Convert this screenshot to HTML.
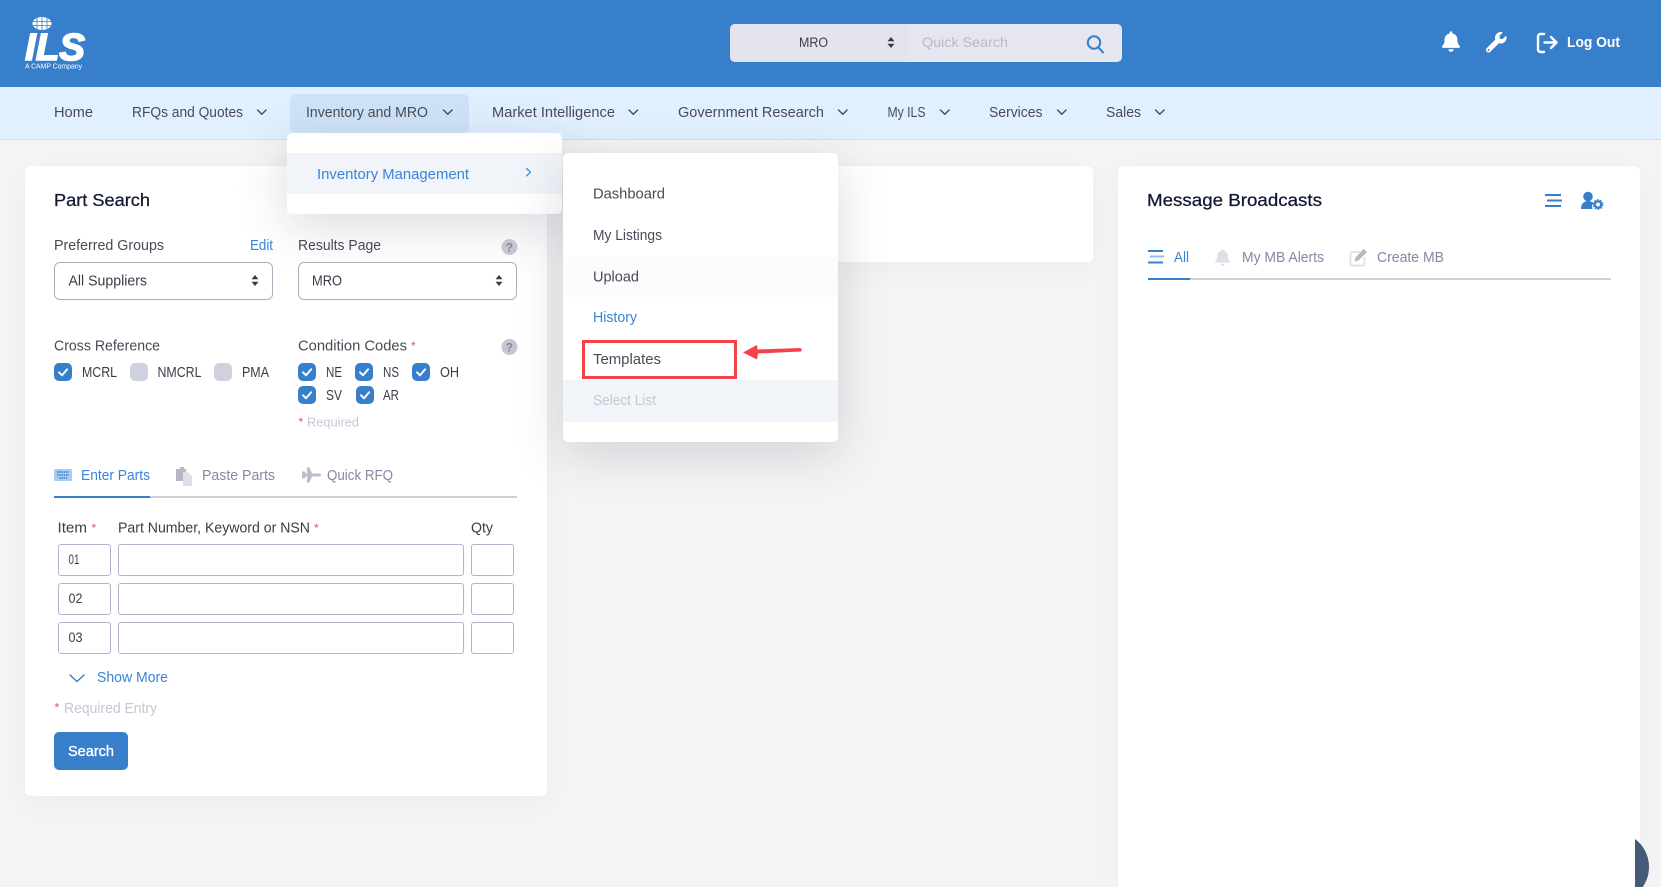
<!DOCTYPE html>
<html lang="en">
<head>
<meta charset="utf-8">
<title>ILS Part Search</title>
<style>
html,body{margin:0;padding:0;width:1661px;height:891px;overflow:hidden;background:#fff}
body{position:relative;font-family:"Liberation Sans",sans-serif}
.b{position:absolute;box-sizing:border-box}
.card{background:#fff;border-radius:6px;box-shadow:0 8px 30px rgba(40,40,70,.035)}
.drop{background:#fff;border-radius:5px;box-shadow:0 12px 50px rgba(40,40,80,.17)}
svg{position:absolute;left:0;top:0}
text{font-family:"Liberation Sans",sans-serif;font-size:14.4px;fill:#4a4a57;white-space:pre}
.blue{fill:#3a84d6}
.mut{fill:#8886a3}
.lt{fill:#c6c6d4}
.star{fill:#e0526c;font-size:12px}
.head{font-size:17.5px;fill:#11152f;font-weight:normal;stroke:#11152f;stroke-width:.25px}
.nav{fill:#4b4b55;font-size:14.6px}
.dk{fill:#3c3c48}
</style>
</head>
<body>
<!-- page layers -->
<div class="b" style="left:0;top:0;width:1661px;height:887px;background:#f4f4f4"></div>
<div class="b card" style="left:25px;top:166px;width:522px;height:630px"></div>
<div class="b card" style="left:566px;top:166px;width:527px;height:96px"></div>
<div class="b card" style="left:1118px;top:166px;width:522px;height:721px;border-radius:6px 6px 0 0"></div>
<div class="b" style="left:0;top:0;width:1661px;height:87px;background:#377fcb"></div>
<div class="b" style="left:0;top:87px;width:1661px;height:53px;background:#e0f0fe;border-bottom:1px solid #d9dbe0"></div>
<div class="b" style="left:290px;top:94px;width:179px;height:39px;background:#cfe3f8;border-radius:6px"></div>
<div class="b drop" style="left:287px;top:133px;width:275px;height:81px"></div>
<div class="b" style="left:287px;top:153px;width:275px;height:41px;background:#f1f5f9"></div>
<div class="b drop" style="left:563px;top:153px;width:275px;height:289px"></div>
<div class="b" style="left:563px;top:256px;width:275px;height:41px;background:#fcfcfd"></div>
<div class="b" style="left:563px;top:380px;width:275px;height:42px;background:#f1f5f9"></div>
<!-- search box -->
<div class="b" style="left:730px;top:24px;width:392px;height:38px;background:#e6e6f0;border-radius:5px"></div>
<div class="b" style="left:730px;top:24px;width:178px;height:38px;background:#e4e4ee;border-radius:5px 0 0 5px"></div>
<!-- form boxes -->
<div class="b" style="left:54px;top:262px;width:219px;height:38px;border:1px solid #aeadc0;border-radius:6px;background:#fff"></div>
<div class="b" style="left:298px;top:262px;width:219px;height:38px;border:1px solid #aeadc0;border-radius:6px;background:#fff"></div>
<div class="b" style="left:58px;top:544px;width:53px;height:32px;border:1px solid #b5b2cb;border-radius:3px"></div>
<div class="b" style="left:118px;top:544px;width:346px;height:32px;border:1px solid #b5b2cb;border-radius:3px"></div>
<div class="b" style="left:471px;top:544px;width:43px;height:32px;border:1px solid #b5b2cb;border-radius:3px"></div>
<div class="b" style="left:58px;top:583px;width:53px;height:32px;border:1px solid #b5b2cb;border-radius:3px"></div>
<div class="b" style="left:118px;top:583px;width:346px;height:32px;border:1px solid #b5b2cb;border-radius:3px"></div>
<div class="b" style="left:471px;top:583px;width:43px;height:32px;border:1px solid #b5b2cb;border-radius:3px"></div>
<div class="b" style="left:58px;top:622px;width:53px;height:32px;border:1px solid #b5b2cb;border-radius:3px"></div>
<div class="b" style="left:118px;top:622px;width:346px;height:32px;border:1px solid #b5b2cb;border-radius:3px"></div>
<div class="b" style="left:471px;top:622px;width:43px;height:32px;border:1px solid #b5b2cb;border-radius:3px"></div>
<div class="b" style="left:54px;top:732px;width:74px;height:38px;background:#377fcb;border-radius:5px"></div>
<!-- tab lines -->
<div class="b" style="left:54px;top:496px;width:463px;height:2px;background:#cfd0de"></div>
<div class="b" style="left:54px;top:496px;width:96px;height:2px;background:#377fcb"></div>
<div class="b" style="left:1148px;top:278px;width:463px;height:2px;background:#cfd0de"></div>
<div class="b" style="left:1148px;top:278px;width:42px;height:2px;background:#377fcb"></div>
<!-- white strip at the bottom -->
<div class="b" style="left:0;top:887px;width:1661px;height:4px;background:#fff"></div>

<svg width="1661" height="891" viewBox="0 0 1661 891" xmlns="http://www.w3.org/2000/svg">
<defs>
<symbol id="ck" viewBox="0 0 18 18" overflow="visible">
  <rect width="18" height="18" rx="5" fill="#377fcb"/>
  <path d="M5 9.3l3 3 5.2-6" fill="none" stroke="#fff" stroke-width="1.9" stroke-linecap="round" stroke-linejoin="round"/>
</symbol>
<symbol id="sort" viewBox="0 0 8 12" overflow="visible">
  <path d="M4 0L7.8 4.6H.2zM4 12L.2 7.4H7.8z" fill="#3a3a46"/>
</symbol>
<clipPath id="cc"><rect x="1635" y="800" width="26" height="87"/></clipPath>
</defs>

<!-- logo -->
<ellipse cx="42" cy="23.5" rx="9.5" ry="6.5" fill="#fff"/>
<path d="M32.5 21.5h19M32.5 25.5h19M37 17.500v12M42 17v13M47 17.500v12" stroke="#377fcb" stroke-width=".8" fill="none"/>
<text x="25" y="60" textLength="60" lengthAdjust="spacingAndGlyphs" style="font-size:38px;font-weight:bold;font-style:italic;fill:#fff;stroke:#fff;stroke-width:1.6px">ILS</text>
<text x="25" y="68.5" textLength="57" lengthAdjust="spacingAndGlyphs" style="font-size:7px;fill:#fff">A CAMP Company</text>

<!-- header search -->
<text x="799" y="47" textLength="29" lengthAdjust="spacingAndGlyphs" style="font-size:13.5px;fill:#3c3c48">MRO</text>
<use href="#sort" x="887" y="37" width="8" height="11"/>
<text x="922" y="47" textLength="86" lengthAdjust="spacingAndGlyphs" style="font-size:14px;fill:#b9b9c9">Quick Search</text>
<g fill="none" stroke="#377fcb" stroke-width="2"><circle cx="1094" cy="42.5" r="6.2"/><path d="M1098.6 47.5l4.4 5" stroke-linecap="round"/></g>

<!-- header right icons -->
<svg x="1442" y="31" width="18" height="21" viewBox="0 0 448 512"><path fill="#fff" d="M224 512c35.32 0 63.97-28.65 63.97-64H160.03c0 35.35 28.65 64 63.97 64zm215.39-149.71c-19.32-20.76-55.47-51.99-55.47-154.29 0-77.7-54.48-139.9-127.94-155.16V32c0-17.67-14.32-32-31.98-32s-31.98 14.33-31.98 32v20.84C118.56 68.1 64.08 130.3 64.08 208c0 102.3-36.15 133.53-55.47 154.29-6 6.45-8.66 14.16-8.61 21.71.11 16.4 12.98 32 32.1 32h383.8c19.12 0 32-15.6 32.1-32 .05-7.55-2.61-15.27-8.61-21.71z"/></svg>
<svg x="1486" y="32" width="20.5" height="20.5" viewBox="0 0 512 512"><path fill="#fff" d="M507.73 109.1c-2.24-9.03-13.54-12.09-20.12-5.51l-74.36 74.36-67.88-11.31-11.31-67.88 74.36-74.36c6.62-6.62 3.43-17.9-5.66-20.16-47.38-11.74-99.55.91-136.58 37.93-39.64 39.64-50.55 97.1-34.05 147.2L18.74 402.76c-24.99 24.99-24.99 65.51 0 90.5 24.99 24.99 65.51 24.99 90.5 0l213.21-213.21c50.12 16.71 107.47 5.68 147.37-34.22 37.07-37.07 49.7-89.32 37.91-136.73zM64 472c-13.25 0-24-10.75-24-24 0-13.26 10.75-24 24-24s24 10.74 24 24c0 13.25-10.75 24-24 24z"/></svg>
<g fill="none" stroke="#fff" stroke-width="2.4" stroke-linecap="round" stroke-linejoin="round"><path d="M1544 34h-3.5a2.5 2.5 0 0 0-2.500 2.500v13a2.500 2.500 0 0 0 2.500 2.500h3.500"/><path d="M1544.500 42.500h12M1551 37l5.500 5.500-5.500 5.500"/></g>
<text x="1567" y="47" textLength="53" lengthAdjust="spacingAndGlyphs" style="font-size:14.5px;font-weight:bold;fill:#fff">Log Out</text>

<!-- nav -->
<text class="nav" x="54" y="117" textLength="39" lengthAdjust="spacingAndGlyphs">Home</text>
<text class="nav" x="132" y="117" textLength="111" lengthAdjust="spacingAndGlyphs">RFQs and Quotes</text>
<text class="nav" x="306" y="117" textLength="122" lengthAdjust="spacingAndGlyphs">Inventory and MRO</text>
<text class="nav" x="492" y="117" textLength="123" lengthAdjust="spacingAndGlyphs">Market Intelligence</text>
<text class="nav" x="678" y="117" textLength="146" lengthAdjust="spacingAndGlyphs">Government Research</text>
<text class="nav" x="887.500" y="117" textLength="38" lengthAdjust="spacingAndGlyphs">My ILS</text>
<text class="nav" x="989" y="117" textLength="53.500" lengthAdjust="spacingAndGlyphs">Services</text>
<text class="nav" x="1106" y="117" textLength="35" lengthAdjust="spacingAndGlyphs">Sales</text>
<g fill="none" stroke="#4b4b55" stroke-width="1.400" stroke-linecap="round" stroke-linejoin="round">
<path d="M257.500 110l4.300 4.300 4.300-4.300M443.500 110l4.300 4.300 4.300-4.300M629 110l4.300 4.300 4.300-4.300M838.500 110l4.300 4.300 4.300-4.300M940.500 110l4.300 4.300 4.300-4.300M1057.500 110l4.300 4.300 4.300-4.300M1155.500 110l4.300 4.300 4.300-4.300"/>
</g>

<!-- dropdown 1 -->
<text class="blue" x="317" y="179" textLength="152" lengthAdjust="spacingAndGlyphs">Inventory Management</text>
<path d="M526.500 168.500l4 3.700-4 3.700" fill="none" stroke="#3a84d6" stroke-width="1.200" stroke-linecap="round" stroke-linejoin="round"/>

<!-- dropdown 2 -->
<text x="593" y="198.500" textLength="72" lengthAdjust="spacingAndGlyphs">Dashboard</text>
<text x="593" y="240" textLength="69" lengthAdjust="spacingAndGlyphs">My Listings</text>
<text x="593" y="281.500" textLength="46" lengthAdjust="spacingAndGlyphs">Upload</text>
<text class="blue" x="593" y="322" textLength="44" lengthAdjust="spacingAndGlyphs">History</text>
<text x="593" y="364" textLength="68" lengthAdjust="spacingAndGlyphs">Templates</text>
<text class="lt" x="593" y="405" textLength="63" lengthAdjust="spacingAndGlyphs">Select List</text>
<rect x="583.500" y="341.500" width="152" height="36" fill="none" stroke="#f5424a" stroke-width="3"/>
<path d="M743 352.500l14-7.500 .5 4.500 42-1.500a2 2 0 0 1 1.500 3.500l-43 2 -1 6z" fill="#f5424a"/>

<!-- part search -->
<text class="head" x="54" y="206" textLength="96" lengthAdjust="spacingAndGlyphs">Part Search</text>
<text x="54" y="250" textLength="110" lengthAdjust="spacingAndGlyphs">Preferred Groups</text>
<text class="blue" x="250" y="250" textLength="23" lengthAdjust="spacingAndGlyphs">Edit</text>
<text x="298" y="250" textLength="83" lengthAdjust="spacingAndGlyphs">Results Page</text>
<circle cx="509.500" cy="247" r="8" fill="#c6c6d2"/>
<text x="505.700" y="251.500" textLength="7.500" lengthAdjust="spacingAndGlyphs" style="font-size:12px;font-weight:bold;fill:#85849a">?</text>
<text class="dk" x="68.500" y="285.500" textLength="78.500" lengthAdjust="spacingAndGlyphs">All Suppliers</text>
<use href="#sort" x="251" y="275" width="8" height="11"/>
<text class="dk" x="312" y="285.500" textLength="30" lengthAdjust="spacingAndGlyphs">MRO</text>
<use href="#sort" x="495" y="275" width="8" height="11"/>

<text x="54" y="350.500" textLength="106" lengthAdjust="spacingAndGlyphs">Cross Reference</text>
<text x="298" y="350.500" textLength="109" lengthAdjust="spacingAndGlyphs">Condition Codes</text>
<text class="star" x="411" y="350">*</text>
<circle cx="509.500" cy="347" r="8" fill="#c6c6d2"/>
<text x="505.700" y="351.500" textLength="7.500" lengthAdjust="spacingAndGlyphs" style="font-size:12px;font-weight:bold;fill:#85849a">?</text>

<use href="#ck" x="54" y="363" width="18" height="18"/>
<text class="dk" x="82" y="377" textLength="35" lengthAdjust="spacingAndGlyphs">MCRL</text>
<rect x="130" y="363" width="18" height="18" rx="5" fill="#d0d1e0"/>
<text class="dk" x="157.500" y="377" textLength="44" lengthAdjust="spacingAndGlyphs">NMCRL</text>
<rect x="214" y="363" width="18" height="18" rx="5" fill="#d0d1e0"/>
<text class="dk" x="242" y="377" textLength="27" lengthAdjust="spacingAndGlyphs">PMA</text>
<use href="#ck" x="298" y="363" width="18" height="18"/>
<text class="dk" x="326" y="377" textLength="16" lengthAdjust="spacingAndGlyphs">NE</text>
<use href="#ck" x="355" y="363" width="18" height="18"/>
<text class="dk" x="383" y="377" textLength="16" lengthAdjust="spacingAndGlyphs">NS</text>
<use href="#ck" x="412" y="363" width="18" height="18"/>
<text class="dk" x="440" y="377" textLength="19" lengthAdjust="spacingAndGlyphs">OH</text>
<use href="#ck" x="298" y="386" width="18" height="18"/>
<text class="dk" x="326" y="400" textLength="16" lengthAdjust="spacingAndGlyphs">SV</text>
<use href="#ck" x="356" y="386" width="18" height="18"/>
<text class="dk" x="383" y="400" textLength="16" lengthAdjust="spacingAndGlyphs">AR</text>
<text class="star" x="298.500" y="426">*</text>
<text class="lt" x="307" y="426.500" textLength="52" lengthAdjust="spacingAndGlyphs" style="font-size:13px">Required</text>

<!-- part tabs -->
<rect x="54" y="469" width="18" height="12" rx="1.500" fill="#a9cdf0"/>
<path d="M57 472h12M57 475h12M59 478h8" stroke="#377fcb" stroke-width="1.500" stroke-dasharray="1.500 .8" fill="none"/>
<text class="blue" x="81" y="480" textLength="69" lengthAdjust="spacingAndGlyphs">Enter Parts</text>
<path d="M176 469h4v-2h4v2h2v12h-10z" fill="#b6b6c4"/>
<path d="M183 472h4l5 4v10h-9z" fill="#dfdfe8"/>
<text class="mut" x="202" y="480" textLength="73" lengthAdjust="spacingAndGlyphs">Paste Parts</text>
<path d="M302 471.500h2.500l1.500 2h14l1.500 1.500-1.500 1.500h-14l-1.500 2h-2.500zM306.500 467.500h3l2.500 6v3l-2.500 6h-3l1-6v-3z" fill="#bcbcca"/>
<text class="mut" x="327" y="480" textLength="66" lengthAdjust="spacingAndGlyphs">Quick RFQ</text>

<!-- table -->
<text class="dk" x="57.500" y="532.500" textLength="29.500" lengthAdjust="spacingAndGlyphs">Item</text>
<text class="star" x="91.500" y="532">*</text>
<text class="dk" x="118" y="532.500" textLength="192" lengthAdjust="spacingAndGlyphs">Part Number, Keyword or NSN</text>
<text class="star" x="314" y="532">*</text>
<text class="dk" x="471" y="532.500" textLength="22" lengthAdjust="spacingAndGlyphs">Qty</text>
<text class="dk" x="68.500" y="564" textLength="11" lengthAdjust="spacingAndGlyphs" style="font-size:13.500px">01</text>
<text class="dk" x="68.500" y="603" textLength="14" lengthAdjust="spacingAndGlyphs" style="font-size:13.500px">02</text>
<text class="dk" x="68.500" y="642" textLength="14" lengthAdjust="spacingAndGlyphs" style="font-size:13.500px">03</text>
<path d="M70 675l7 6.500 7-6.500" fill="none" stroke="#377fcb" stroke-width="1.400" stroke-linecap="round" stroke-linejoin="round"/>
<text class="blue" x="97" y="682" textLength="71" lengthAdjust="spacingAndGlyphs">Show More</text>
<text class="star" x="54.500" y="711.500">*</text>
<text class="lt" x="64" y="713" textLength="93" lengthAdjust="spacingAndGlyphs">Required Entry</text>
<text x="68" y="756" textLength="46" lengthAdjust="spacingAndGlyphs" style="fill:#fff;stroke:#fff;stroke-width:.35px;font-size:14.400px">Search</text>

<!-- message broadcasts -->
<text class="head" x="1147" y="206" textLength="175" lengthAdjust="spacingAndGlyphs">Message Broadcasts</text>
<path d="M1545 195h16M1547 200.500h15M1545 206h16" stroke="#377fcb" stroke-width="2" fill="none"/>
<circle cx="1588" cy="196.500" r="4.800" fill="#377fcb"/>
<path d="M1581 209c0-5.500 3-8 7-8 2.500 0 4 .6 5.500 2a6 6 0 0 0-1 6z" fill="#377fcb"/>
<circle cx="1598" cy="204.500" r="3.200" fill="none" stroke="#377fcb" stroke-width="2.400"/>
<circle cx="1598" cy="204.500" r="4.700" fill="none" stroke="#377fcb" stroke-width="1.400" stroke-dasharray="1.600 1.400"/>

<path d="M1148 251h15M1148 262.500h15" stroke="#377fcb" stroke-width="2" fill="none"/>
<path d="M1150 256.500h14" stroke="#8fbce9" stroke-width="2" fill="none"/>
<text class="blue" x="1174" y="262" textLength="15" lengthAdjust="spacingAndGlyphs">All</text>
<svg x="1215" y="249" width="15" height="17" viewBox="0 0 448 512"><path fill="#dfdfe8" d="M224 512c35.32 0 63.97-28.65 63.97-64H160.03c0 35.35 28.65 64 63.97 64zm215.39-149.71c-19.32-20.76-55.47-51.99-55.47-154.29 0-77.7-54.48-139.9-127.94-155.16V32c0-17.67-14.32-32-31.98-32s-31.98 14.33-31.98 32v20.84C118.56 68.1 64.08 130.3 64.08 208c0 102.3-36.15 133.53-55.47 154.29-6 6.45-8.66 14.16-8.61 21.71.11 16.4 12.98 32 32.100 32h383.8c19.12 0 32-15.6 32.1-32 .05-7.55-2.61-15.27-8.61-21.71z"/></svg>
<text class="mut" x="1242" y="262" textLength="82" lengthAdjust="spacingAndGlyphs">My MB Alerts</text>
<path d="M1360 252h-8a1.500 1.500 0 0 0-1.500 1.500v10.500a1.500 1.500 0 0 0 1.500 1.500h11a1.500 1.500 0 0 0 1.500-1.500v-7" fill="none" stroke="#dfdfe8" stroke-width="1.800"/>
<path d="M1354.500 261.500l1-4 8-8.500 3.500 3-8.500 8.500z" fill="#b6b6c4"/>
<text class="mut" x="1377" y="262" textLength="67" lengthAdjust="spacingAndGlyphs">Create MB</text>

<!-- chat bubble clipped -->
<circle cx="1614" cy="867" r="35" fill="#455a78" clip-path="url(#cc)"/>
</svg>
</body>
</html>
